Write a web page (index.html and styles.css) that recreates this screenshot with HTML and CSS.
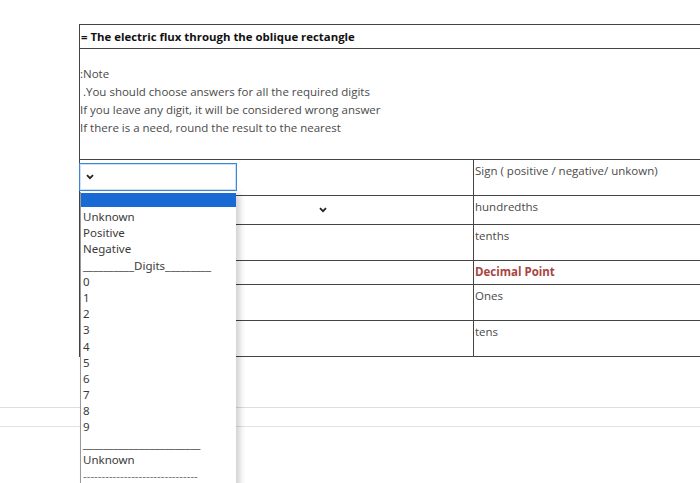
FILE: index.html
```html
<!DOCTYPE html>
<html>
<head>
<meta charset="utf-8">
<title>Electric flux</title>
<link rel="stylesheet" href="styles.css">
</head>
<body>
<div class="page">
  <div class="quiz">
    <div class="row title-row"><div class="title">= The electric flux through the oblique rectangle</div></div>
    <div class="row note-row">
      <div class="note">
        <div>:Note</div>
        <div>&nbsp;.You should choose answers for all the required digits</div>
        <div>If you leave any digit, it will be considered wrong answer</div>
        <div>If there is a need, round the result to the nearest</div>
      </div>
    </div>
    <div class="row h35">
      <div class="pick"><div class="select focused"><svg class="chev" width="8" height="6" viewBox="0 0 8 6"><path d="M1 1.2 L4 4.2 L7 1.2" fill="none" stroke="#222" stroke-width="1.8"/></svg></div></div>
      <div class="label">Sign ( positive / negative/ unkown)</div>
    </div>
    <div class="row h28">
      <div class="pick"><div class="select plain"><svg class="chev" width="8" height="6" viewBox="0 0 8 6"><path d="M1 1.2 L4 4.2 L7 1.2" fill="none" stroke="#222" stroke-width="1.8"/></svg></div></div>
      <div class="label">hundredths</div>
    </div>
    <div class="row h35">
      <div class="pick"></div>
      <div class="label">tenths</div>
    </div>
    <div class="row h23">
      <div class="pick"></div>
      <div class="label point">Decimal Point</div>
    </div>
    <div class="row h35">
      <div class="pick"></div>
      <div class="label">Ones</div>
    </div>
    <div class="row h35">
      <div class="pick"></div>
      <div class="label">tens</div>
    </div>
  </div>
  <div class="footer-lines"></div>

  <div class="dropdown">
    <div class="opt selected">&nbsp;</div>
    <div class="opt">Unknown</div>
    <div class="opt">Positive</div>
    <div class="opt">Negative</div>
    <div class="opt">__________Digits_________</div>
    <div class="opt">0</div>
    <div class="opt">1</div>
    <div class="opt">2</div>
    <div class="opt">3</div>
    <div class="opt">4</div>
    <div class="opt">5</div>
    <div class="opt">6</div>
    <div class="opt">7</div>
    <div class="opt">8</div>
    <div class="opt">9</div>
    <div class="opt">_______________________</div>
    <div class="opt">Unknown</div>
    <div class="opt dash">-------------------------------</div>
  </div>
</div>
</body>
</html>
```
FILE: styles.css
```css
html, body {
  margin: 0;
  padding: 0;
  background: #fff;
  overflow: hidden;
}
body {
  width: 700px;
  height: 483px;
  font-family: "Open Sans", "Liberation Sans", sans-serif;
  color: #333;
}
.page {
  position: relative;
  padding: 24px 0 0 79px;
  height: 459px;
}
.quiz {
  width: 700px;
  border-top: 1px solid #444;
  border-left: 1px solid #444;
}
.row {
  display: flex;
  border-bottom: 1px solid #444;
  box-sizing: content-box;
}
.title-row { height: 23px; align-items: center; }
.title {
  font-weight: 700;
  font-size: 11.4px;
  color: #111;
  padding-left: 1px;
}
.note-row { height: 110px; }
.note {
  padding-top: 16px;
  font-size: 11.5px;
  line-height: 18px;
  color: #4a4a4a;
}
.h35 { height: 35px; }
.h28 { height: 28px; }
.h23 { height: 23px; }
.pick {
  width: 393px;
  border-right: 1px solid #444;
  flex: none;
  position: relative;
}
.label {
  font-size: 11.5px;
  line-height: 18px;
  padding-top: 2px;
  padding-left: 1px;
  color: #4a4a4a;
}
.label.point {
  color: #a94442;
  font-weight: 700;
}
.select {
  box-sizing: border-box;
  height: 28px;
  display: flex;
  align-items: center;
}
.select.focused {
  margin-top: 3px;
  width: 158px;
  margin-left: -1px;
  border: 1px solid #3d86d6;
  box-shadow: inset 0 0 0 1px rgba(61, 134, 214, 0.25);
  padding-left: 6px;
}
.select.plain {
  width: 250px;
  padding-left: 239px;
  height: 28px;
}
.chev { display: block; }
.footer-lines {
  margin-left: -79px;
  width: 700px;
  margin-top: 50px;
  height: 18px;
  border-top: 1px solid #ddd;
  border-bottom: 1px solid #e2e2e2;
}
.dropdown {
  position: absolute;
  left: 80px;
  top: 192px;
  width: 155px;
  height: 300px;
  background: #fff;
  border-left: 1px solid #999;
  box-shadow: 4px 2px 6px rgba(0, 0, 0, 0.18);
  font-family: "Noto Sans", "Open Sans", sans-serif;
  font-size: 11.5px;
  color: #3a3a3a;
  overflow: hidden;
}
.opt {
  height: 16.2px;
  line-height: 16.2px;
  padding-left: 2px;
  white-space: nowrap;
}
.opt.dash { color: #777; }
.opt.selected {
  background: #1a6ad6;
  margin-top: 1px;
  height: 14px;
  margin-bottom: 2px;
}
```
